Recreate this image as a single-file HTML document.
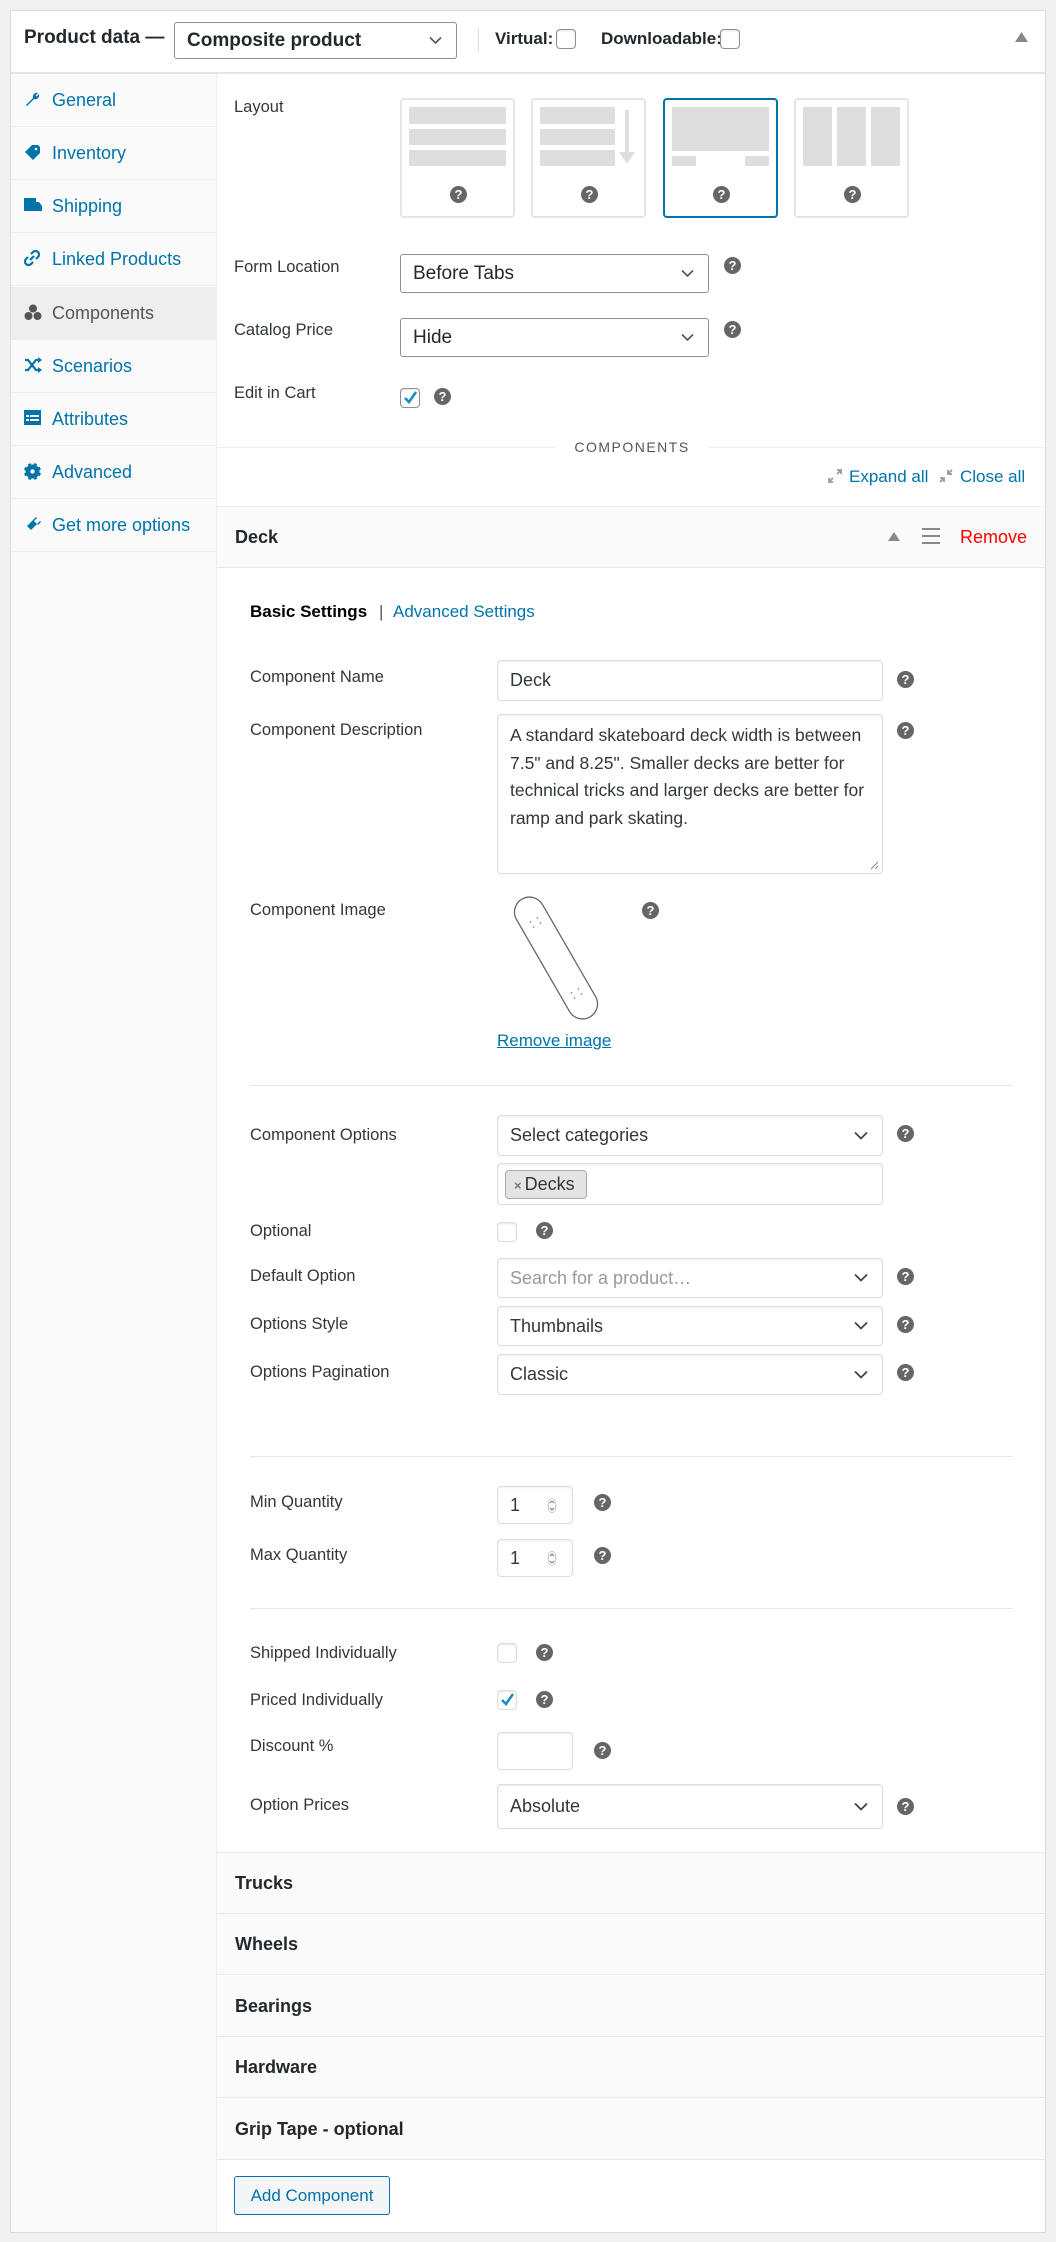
<!DOCTYPE html>
<html><head><meta charset="utf-8"><style>
*{box-sizing:border-box}
body{margin:0;width:1056px;height:2242px;background:#f1f1f1;font-family:"Liberation Sans",Arial,sans-serif;position:relative;overflow:hidden;color:#23282d}
.a{position:absolute}
#box{left:10px;top:10px;width:1036px;height:2223px;background:#fff;border:1px solid #dcdcde}
.side{left:11px;top:74px;width:206px;height:2158px;background:#fafafa;border-right:1px solid #eee}
.si{position:absolute;left:11px;width:206px;height:53px;border-bottom:1px solid #eee;font-size:18px;color:#0073aa;line-height:52px;padding-left:41px}
.si svg{position:absolute;left:13px;top:17px}
.lbl{position:absolute;font-size:16.5px;color:#32373c;line-height:22px}
.h{position:absolute;width:17px;height:17px;border-radius:50%;background:#666;color:#fff;font-size:13px;font-weight:bold;text-align:center;line-height:17px}
.inp{position:absolute;left:497px;width:386px;border:1px solid #ddd;border-radius:4px;box-shadow:inset 0 1px 2px rgba(0,0,0,.07);background:#fff;font-size:18px;padding-left:12px;color:#32373c}
.sel{position:absolute;border:1px solid #8c8f94;border-radius:3px;background:#fff;font-size:19px;padding-left:12px;color:#23282d}
.chev{position:absolute;right:14px;top:50%;margin-top:-5px}
.cb{position:absolute;width:20px;height:20px;border:1px solid #c3c4c7;border-radius:4px;background:#fff;box-shadow:inset 0 1px 2px rgba(0,0,0,.1)}
.tile{position:absolute;top:98px;width:115px;height:120px;border:2px solid #e5e5e5;border-radius:4px;background:#fff}
.g{position:absolute;background:#dedede}
.hr{position:absolute;left:250px;width:762px;height:1px;background:#e5e5e5}
.comp{position:absolute;left:217px;width:828px;height:61px;background:#fafafa;border-bottom:1px solid #e9e9e9;font-size:18px;font-weight:bold;line-height:60px;padding-left:18px;color:#23282d}
</style></head><body>
<div id="box" class="a"></div>
<div class="a" style="left:11px;top:72px;width:1034px;height:2px;background:#e5e5e5"></div>
<div class="a" style="left:24px;top:26px;font-size:19px;font-weight:bold;line-height:24px">Product data —</div>
<div class="sel" style="left:174px;top:22px;width:283px;height:37px;line-height:35px;font-weight:bold;font-size:19px">Composite product<svg class="chev" width="13" height="9" viewBox="0 0 13 9"><path d="M1 1.5 6.5 7 12 1.5" fill="none" stroke="#555" stroke-width="1.6"/></svg></div>
<div class="a" style="left:478px;top:28px;width:1px;height:24px;background:#ddd"></div>
<div class="a" style="left:495px;top:28px;font-size:17px;font-weight:bold;line-height:22px">Virtual:</div>
<div class="cb" style="left:556px;top:29px;border-color:#8c8f94"></div>
<div class="a" style="left:601px;top:28px;font-size:17px;font-weight:bold;line-height:22px">Downloadable:</div>
<div class="cb" style="left:720px;top:29px;border-color:#8c8f94"></div>
<svg class="a" style="left:1015px;top:32px" width="13" height="10"><path d="M6.5 0 13 10H0z" fill="#888"/></svg>

<div class="a side"></div>
<div class="si" style="top:74px"><svg width="16" height="16" viewBox="0 0 16 16"><path d="M2 14 9 7a4 4 0 0 1 5-5l-2.5 2.5 1 1L15 3a4 4 0 0 1-5 5l-7 7z" fill="#0073aa"/></svg>General</div>
<div class="si" style="top:127px"><svg width="17" height="17" viewBox="0 0 17 17"><path d="M1 8 8 1h6l2 2v6l-7 7z" fill="#0073aa"/><circle cx="12" cy="5" r="1.3" fill="#fafafa"/></svg>Inventory</div>
<div class="si" style="top:180px"><svg width="18" height="16" viewBox="0 0 18 16"><path d="M0 1h12v4h3l3 4v5H0z" fill="#0073aa"/></svg>Shipping</div>
<div class="si" style="top:233px"><svg width="16" height="16" viewBox="0 0 16 16"><path d="M6 10 10 6M7 4l2-2a3 3 0 0 1 5 5l-2 2M9 12l-2 2a3 3 0 0 1-5-5l2-2" fill="none" stroke="#0073aa" stroke-width="2.2"/></svg>Linked Products</div>
<div class="si" style="top:287px;background:#eee;color:#555"><svg width="18" height="17" viewBox="0 0 18 17"><circle cx="9" cy="4.5" r="4" fill="#555"/><circle cx="4.5" cy="12" r="4" fill="#555"/><circle cx="13.5" cy="12" r="4" fill="#555"/></svg>Components</div>
<div class="si" style="top:340px"><svg width="18" height="16" viewBox="0 0 18 16"><path d="M1 3h3l8 10h3M1 13h3l8-10h3" fill="none" stroke="#0073aa" stroke-width="2.2"/><path d="M14 0l4 3-4 3zM14 10l4 3-4 3z" fill="#0073aa"/></svg>Scenarios</div>
<div class="si" style="top:393px"><svg width="17" height="15" viewBox="0 0 17 15"><rect x="0" y="0" width="17" height="15" fill="#0073aa"/><rect x="2" y="5" width="3" height="2" fill="#fafafa"/><rect x="6" y="5" width="9" height="2" fill="#fafafa"/><rect x="2" y="9" width="3" height="2" fill="#fafafa"/><rect x="6" y="9" width="9" height="2" fill="#fafafa"/></svg>Attributes</div>
<div class="si" style="top:446px"><svg width="17" height="17" viewBox="0 0 17 17"><circle cx="8.5" cy="8.5" r="5.5" fill="none" stroke="#0073aa" stroke-width="3"/><path d="M7 0h3v17H7zM0 7h17v3H0z" fill="#0073aa" transform="rotate(22 8.5 8.5)"/><path d="M7 0h3v17H7zM0 7h17v3H0z" fill="#0073aa" transform="rotate(67 8.5 8.5)"/><circle cx="8.5" cy="8.5" r="2.2" fill="#fafafa"/></svg>Advanced</div>
<div class="si" style="top:499px"><svg width="17" height="17" viewBox="0 0 17 17"><path d="M2 15 5 12 3 10 9 4l4 4-6 6-2-2-3 3zM9 4l3-3 1 1-3 3zM13 8l3-3 1 1-3 3z" fill="#0073aa"/></svg>Get more options</div>

<div class="lbl" style="left:234px;top:96px">Layout</div>
<div class="tile" style="left:400px"><div class="g" style="left:7px;top:7px;width:97px;height:17px"></div><div class="g" style="left:7px;top:29px;width:97px;height:16px"></div><div class="g" style="left:7px;top:50px;width:97px;height:16px"></div><div class="h" style="left:48px;top:86px">?</div></div>
<div class="tile" style="left:531px"><div class="g" style="left:7px;top:7px;width:75px;height:17px"></div><div class="g" style="left:7px;top:29px;width:75px;height:16px"></div><div class="g" style="left:7px;top:50px;width:75px;height:16px"></div><div class="g" style="left:92px;top:10px;width:4px;height:44px"></div><svg class="a" style="left:86px;top:52px" width="16" height="12"><path d="M0 0h16L8 12z" fill="#dedede"/></svg><div class="h" style="left:48px;top:86px">?</div></div>
<div class="tile" style="left:663px;border-color:#0073aa"><div class="g" style="left:7px;top:7px;width:97px;height:44px"></div><div class="g" style="left:7px;top:56px;width:24px;height:10px"></div><div class="g" style="left:80px;top:56px;width:24px;height:10px"></div><div class="h" style="left:48px;top:86px">?</div></div>
<div class="tile" style="left:794px"><div class="g" style="left:7px;top:7px;width:29px;height:59px"></div><div class="g" style="left:41px;top:7px;width:29px;height:59px"></div><div class="g" style="left:75px;top:7px;width:29px;height:59px"></div><div class="h" style="left:48px;top:86px">?</div></div>

<div class="lbl" style="left:234px;top:256px">Form Location</div>
<div class="sel" style="left:400px;top:254px;width:309px;height:39px;line-height:37px">Before Tabs<svg class="chev" width="13" height="9" viewBox="0 0 13 9"><path d="M1 1.5 6.5 7 12 1.5" fill="none" stroke="#555" stroke-width="1.6"/></svg></div>
<div class="h" style="left:724px;top:257px">?</div>
<div class="lbl" style="left:234px;top:319px">Catalog Price</div>
<div class="sel" style="left:400px;top:318px;width:309px;height:39px;line-height:37px">Hide<svg class="chev" width="13" height="9" viewBox="0 0 13 9"><path d="M1 1.5 6.5 7 12 1.5" fill="none" stroke="#555" stroke-width="1.6"/></svg></div>
<div class="h" style="left:724px;top:321px">?</div>
<div class="lbl" style="left:234px;top:382px">Edit in Cart</div>
<div class="cb" style="left:400px;top:388px;border-color:#8c8f94"><svg class="a" style="left:2px;top:1px" width="15" height="15"><path d="M2 8 6 12 13 2" fill="none" stroke="#1e8cbe" stroke-width="2.6"/></svg></div>
<div class="h" style="left:434px;top:388px">?</div>

<div class="a" style="left:217px;top:447px;width:828px;height:1px;background:#eee"></div>
<div class="a" style="left:555px;top:436px;width:154px;height:22px;background:#fff;text-align:center;font-size:14px;letter-spacing:1.5px;color:#555;line-height:22px">COMPONENTS</div>
<svg class="a" style="left:828px;top:469px" width="14" height="14"><path d="M1 13 5 9M9 5l4-4M1 9v4h4M9 1h4v4" fill="none" stroke="#999" stroke-width="1.8"/></svg>
<div class="a" style="left:849px;top:466px;font-size:17px;color:#0073aa;line-height:22px">Expand all</div>
<svg class="a" style="left:939px;top:469px" width="14" height="14"><path d="M1 13 5 9M9 5l4-4M1 9h4v4M9 1v4h4" fill="none" stroke="#999" stroke-width="1.8"/></svg>
<div class="a" style="left:960px;top:466px;font-size:17px;color:#0073aa;line-height:22px">Close all</div>

<div class="a" style="left:217px;top:506px;width:828px;height:62px;background:#fafafa;border-top:1px solid #eee;border-bottom:1px solid #e9e9e9"></div>
<div class="a" style="left:235px;top:526px;font-size:18px;font-weight:bold;line-height:22px">Deck</div>
<svg class="a" style="left:888px;top:532px" width="12" height="9"><path d="M6 0 12 9H0z" fill="#888"/></svg>
<svg class="a" style="left:922px;top:528px" width="18" height="16"><path d="M0 1h18M0 8h18M0 15h18" stroke="#888" stroke-width="2"/></svg>
<div class="a" style="left:960px;top:526px;font-size:18px;color:#f00;line-height:22px">Remove</div>

<div class="a" style="left:250px;top:601px;font-size:17px;font-weight:bold;line-height:22px;color:#000">Basic Settings</div>
<div class="a" style="left:379px;top:601px;font-size:17px;color:#555;line-height:22px">|</div>
<div class="a" style="left:393px;top:601px;font-size:17px;color:#0073aa;line-height:22px">Advanced Settings</div>

<div class="lbl" style="left:250px;top:666px">Component Name</div>
<div class="inp" style="top:660px;height:41px;line-height:39px">Deck</div>
<div class="h" style="left:897px;top:671px">?</div>
<div class="lbl" style="left:250px;top:719px">Component Description</div>
<div class="inp" style="top:714px;height:160px;line-height:27.5px;padding-top:7px;padding-right:8px;font-size:17.5px">A standard skateboard deck width is between 7.5" and 8.25". Smaller decks are better for technical tricks and larger decks are better for ramp and park skating.<svg class="a" style="right:3px;bottom:3px" width="9" height="9"><path d="M1 8 8 1M5 8 8 5" stroke="#888"/></svg></div>
<div class="h" style="left:897px;top:722px">?</div>
<div class="lbl" style="left:250px;top:899px">Component Image</div>
<svg class="a" style="left:500px;top:890px" width="120" height="135"><g transform="rotate(-30 56 68)"><rect x="41" y="0" width="30" height="136" rx="15" fill="#fff" stroke="#666" stroke-width="1.3"/><g fill="#999"><circle cx="52" cy="24" r=".9"/><circle cx="60" cy="24" r=".9"/><circle cx="52" cy="30" r=".9"/><circle cx="60" cy="30" r=".9"/><circle cx="52" cy="106" r=".9"/><circle cx="60" cy="106" r=".9"/><circle cx="52" cy="112" r=".9"/><circle cx="60" cy="112" r=".9"/></g></g></svg>
<div class="h" style="left:642px;top:902px">?</div>
<div class="a" style="left:497px;top:1030px;font-size:17px;color:#0073aa;text-decoration:underline;line-height:22px">Remove image</div>
<div class="hr" style="top:1085px"></div>

<div class="lbl" style="left:250px;top:1124px">Component Options</div>
<div class="inp" style="top:1115px;height:41px;line-height:39px">Select categories<svg class="chev" width="14" height="9" viewBox="0 0 14 9"><path d="M1 1.5 7 7.5 13 1.5" fill="none" stroke="#444" stroke-width="1.8"/></svg></div>
<div class="h" style="left:897px;top:1125px">?</div>
<div class="inp" style="top:1163px;height:42px"></div>
<div class="a" style="left:505px;top:1170px;width:82px;height:29px;background:#e4e4e4;border:1px solid #aaa;border-radius:4px;font-size:18px;line-height:27px;padding-left:8px;color:#32373c"><span style="font-size:13px;color:#777;font-weight:bold;margin-right:3px">×</span>Decks</div>

<div class="lbl" style="left:250px;top:1220px">Optional</div>
<div class="cb" style="left:497px;top:1222px;border-color:#ddd"></div>
<div class="h" style="left:536px;top:1222px">?</div>
<div class="lbl" style="left:250px;top:1265px">Default Option</div>
<div class="inp" style="top:1258px;height:40px;line-height:38px;color:#999">Search for a product…<svg class="chev" width="14" height="9" viewBox="0 0 14 9"><path d="M1 1.5 7 7.5 13 1.5" fill="none" stroke="#444" stroke-width="1.8"/></svg></div>
<div class="h" style="left:897px;top:1268px">?</div>
<div class="lbl" style="left:250px;top:1313px">Options Style</div>
<div class="inp" style="top:1306px;height:40px;line-height:38px">Thumbnails<svg class="chev" width="14" height="9" viewBox="0 0 14 9"><path d="M1 1.5 7 7.5 13 1.5" fill="none" stroke="#444" stroke-width="1.8"/></svg></div>
<div class="h" style="left:897px;top:1316px">?</div>
<div class="lbl" style="left:250px;top:1361px">Options Pagination</div>
<div class="inp" style="top:1354px;height:41px;line-height:39px">Classic<svg class="chev" width="14" height="9" viewBox="0 0 14 9"><path d="M1 1.5 7 7.5 13 1.5" fill="none" stroke="#444" stroke-width="1.8"/></svg></div>
<div class="h" style="left:897px;top:1364px">?</div>
<div class="hr" style="top:1456px"></div>

<div class="lbl" style="left:250px;top:1491px">Min Quantity</div>
<div class="inp" style="top:1486px;width:76px;height:38px;line-height:36px">1<svg class="a" style="left:50px;top:11px" width="8" height="15"><rect x=".5" y=".5" width="7" height="14" rx="3.5" fill="none" stroke="#ccc"/><path d="M2 5 4 3 6 5M2 10l2 2 2-2" fill="none" stroke="#777"/></svg></div>
<div class="h" style="left:594px;top:1494px">?</div>
<div class="lbl" style="left:250px;top:1544px">Max Quantity</div>
<div class="inp" style="top:1539px;width:76px;height:38px;line-height:36px">1<svg class="a" style="left:50px;top:11px" width="8" height="15"><rect x=".5" y=".5" width="7" height="14" rx="3.5" fill="none" stroke="#ccc"/><path d="M2 5 4 3 6 5M2 10l2 2 2-2" fill="none" stroke="#777"/></svg></div>
<div class="h" style="left:594px;top:1547px">?</div>
<div class="hr" style="top:1608px"></div>

<div class="lbl" style="left:250px;top:1642px">Shipped Individually</div>
<div class="cb" style="left:497px;top:1643px;border-color:#ddd"></div>
<div class="h" style="left:536px;top:1644px">?</div>
<div class="lbl" style="left:250px;top:1689px">Priced Individually</div>
<div class="cb" style="left:497px;top:1690px;border-color:#ddd"><svg class="a" style="left:2px;top:1px" width="15" height="15"><path d="M2 8 6 12 13 2" fill="none" stroke="#1e8cbe" stroke-width="2.6"/></svg></div>
<div class="h" style="left:536px;top:1691px">?</div>
<div class="lbl" style="left:250px;top:1735px">Discount %</div>
<div class="inp" style="top:1732px;width:76px;height:38px"></div>
<div class="h" style="left:594px;top:1742px">?</div>
<div class="lbl" style="left:250px;top:1794px">Option Prices</div>
<div class="inp" style="top:1784px;height:45px;line-height:43px">Absolute<svg class="chev" width="14" height="9" viewBox="0 0 14 9"><path d="M1 1.5 7 7.5 13 1.5" fill="none" stroke="#444" stroke-width="1.8"/></svg></div>
<div class="h" style="left:897px;top:1798px">?</div>

<div class="a" style="left:217px;top:1852px;width:828px;height:1px;background:#e9e9e9"></div>
<div class="comp" style="top:1853px">Trucks</div>
<div class="comp" style="top:1914px">Wheels</div>
<div class="comp" style="top:1976px">Bearings</div>
<div class="comp" style="top:2037px">Hardware</div>
<div class="comp" style="top:2099px">Grip Tape - optional</div>

<div class="a" style="left:234px;top:2176px;width:156px;height:39px;border:1px solid #0073aa;border-radius:3px;background:#f3f5f6;color:#0073aa;font-size:17px;line-height:37px;text-align:center">Add Component</div>
</body></html>
